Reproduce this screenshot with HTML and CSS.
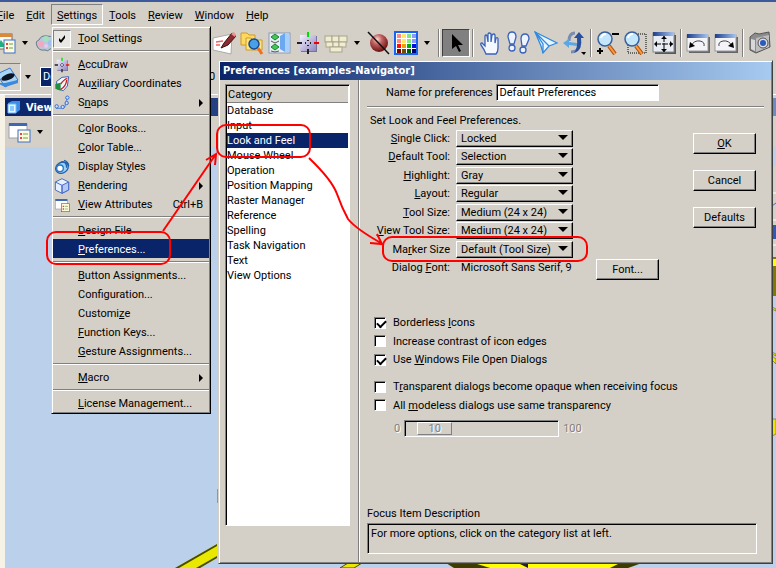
FILE: index.html
```
<!DOCTYPE html>
<html lang="en">
  <head>
    <meta charset="utf-8">
    <meta name="viewport" content="width=device-width,initial-scale=1.0">
    <title>Preferences [examples-Navigator]</title>
    <link rel="stylesheet" href="styles.css">
  </head>

  <body>
    <!-- Shared icons -->
    <svg class="defs" width="0" height="0">
      <defs>
        <radialGradient id="red-ball" cx="0.4" cy="0.3" r="0.7">
          <stop offset="0" stop-color="#ffd8d0"/>
          <stop offset="0.4" stop-color="#c06060"/>
          <stop offset="1" stop-color="#6a1010"/>
        </radialGradient>
        <linearGradient id="lilac" x1="0" y1="0" x2="1" y2="1">
          <stop offset="0" stop-color="#f4f0ff"/>
          <stop offset="1" stop-color="#8f88c0"/>
        </linearGradient>
        <linearGradient id="bar" x1="0" y1="0" x2="1" y2="0">
          <stop offset="0" stop-color="#1c3f8c"/>
          <stop offset="1" stop-color="#a8c4ee"/>
        </linearGradient>
        <symbol id="i-accudraw" viewBox="0 0 24 24">
          <rect x="5" y="5" width="16" height="16" fill="#77739a"/>
          <rect x="4" y="4" width="16" height="16" fill="url(#lilac)"/>
          <path d="M12 1v5" stroke="#00e000" stroke-width="2"/>
          <path d="M18 12h5" stroke="#f00000" stroke-width="2"/>
          <path d="M12 18v5M1 12h5M9 12h1M14 12h1M12 9v1M12 14v1" stroke="#222" stroke-width="2"/>
        </symbol>
        <symbol id="i-attributes" viewBox="0 0 24 24">
          <rect x="2" y="4" width="18" height="14" fill="#fff" stroke="#9aa2b4"/>
          <rect x="2" y="3" width="18" height="3" fill="#3d68b4"/>
          <rect x="11" y="10" width="12" height="12" fill="#fffbd8" stroke="#3a6ed0"/>
          <path d="M13 14h2M13 18h2" stroke="#f04040" stroke-width="2"/>
          <path d="M16 14h5M16 18h5" stroke="#60a060"/>
        </symbol>
        <symbol id="i-glass" viewBox="0 0 24 24">
          <path d="M13 15l6 8" stroke="#b05010" stroke-width="4"/>
          <path d="M13 15l6 8" stroke="#ff9a3c" stroke-width="2"/>
          <circle cx="9" cy="8" r="7" fill="#c4e6fb" stroke="#38609c" stroke-width="1.5"/>
          <path d="M5 7q1-4 5-4" fill="none" stroke="#fff" stroke-width="2"/>
        </symbol>
      </defs>
    </svg>

    <div class="app">
      <nav class="menubar">
        <button><u>F</u>ile</button>
        <button><u>E</u>dit</button>
        <button class="open"><u>S</u>ettings</button>
        <button><u>T</u>ools</button>
        <button><u>R</u>eview</button>
        <button><u>W</u>indow</button>
        <button><u>H</u>elp</button>
      </nav>

      <!-- Main toolbar -->
      <div class="toolbar">
        <div class="group group-left">
          <button class="tool" aria-label="Models">
            <svg viewBox="0 0 24 24"><rect x="1" y="3" width="19" height="15" fill="#f8f8ff" stroke="#7f6a4a"/><rect x="1" y="3" width="19" height="3" fill="#d88a3a"/><path d="M3 16l6-7 5 7z" fill="#20b080"/><rect x="12" y="9" width="11" height="13" fill="#fffbd8" stroke="#3a6ed0"/><path d="M14 13h2M14 17h2" stroke="#f04040" stroke-width="2"/><path d="M17 13h4M17 17h4" stroke="#60a060"/></svg>
          </button>
          <span class="drop"></span>
          <button class="tool" aria-label="References">
            <svg viewBox="0 0 24 24"><path d="M3 15q-2-5 2-6 2-5 8-4 8 0 9 7-1 6-6 6-2 3-5 1-6 1-8-4z" fill="#b8c8d8" stroke="#687888"/><circle cx="7" cy="13" r="3" fill="#f4a8c0"/><circle cx="12" cy="8" r="3" fill="#a4e0c0"/><circle cx="17" cy="12" r="3" fill="#9cc0f0"/><circle cx="12" cy="15" r="2" fill="#e8c8f0"/></svg>
          </button>
        </div>
        <div class="group">
          <button class="tool" aria-label="Markup">
            <svg viewBox="0 0 24 24"><path d="M1 7l19-4-1 20-18-4z" fill="#fff" stroke="#aaa"/><path d="M4 11l7-1M4 14l4 0" stroke="#f06060" stroke-width="1.5"/><path d="M9 17l3-5L20 2l4 3-8 9z" fill="#8c2c30" stroke="#401010"/><path d="M19 3l3-2 2 3-1 2z" fill="#f09090"/></svg>
          </button>
          <button class="tool" aria-label="Project Explorer">
            <svg viewBox="0 0 24 24"><path d="M1 2h6l2 2h6v10H1z" fill="#ffd860" stroke="#d09a20"/><path d="M6 7h5l2 2h9v10H6z" fill="#ffe680" stroke="#d09a20"/><path d="M18 17l4 6" stroke="#f07020" stroke-width="3"/><circle cx="14" cy="13" r="5" fill="#4aa0e8" stroke="#154a90" stroke-width="1.5"/></svg>
          </button>
          <button class="tool" aria-label="Level Display">
            <svg viewBox="0 0 24 24"><rect x="1" y="2" width="21" height="20" fill="#e8ecf4" stroke="#8a9ab4"/><path d="M12 5l5-3v19l-5-3z" fill="#6aa8f0"/><path d="M17 2h4v19h-4z" fill="#a8d0ff"/><path d="M3 6l4-3 4 3-4 3zM3 16l4-3 4 3-4 3z" fill="#40c850" stroke="#208030"/><path d="M3 10l4 2 4-2M3 20l4 1 4-1" fill="none" stroke="#555"/></svg>
          </button>
          <button class="tool" aria-label="AccuDraw"><svg><use href="#i-accudraw"/></svg></button>
          <button class="tool" aria-label="Key-in">
            <svg viewBox="0 0 24 24"><g fill="#f0ecd0" stroke="#a8a48c"><rect x="1" y="5" width="7" height="6"/><rect x="8" y="5" width="7" height="6"/><rect x="15" y="5" width="8" height="6"/><rect x="2" y="11" width="7" height="5"/><rect x="9" y="11" width="6" height="5"/><rect x="15" y="11" width="7" height="5"/><rect x="6" y="16" width="12" height="5"/></g></svg>
          </button>
          <span class="drop"></span>
          <button class="tool" aria-label="Hide">
            <svg viewBox="0 0 24 24"><circle cx="13" cy="12" r="9" fill="url(#red-ball)"/><path d="M2 1l21 22" stroke="#111" stroke-width="1.5"/></svg>
          </button>
          <button class="tool" aria-label="Color Table">
            <svg viewBox="0 0 24 24"><rect x="1" y="1" width="22" height="22" fill="#fff" stroke="#1a62f0" stroke-width="2"/>
              <path d="M3 5h4M3 10h4" stroke="#ff8888" stroke-width="4"/><path d="M8 5h4M8 10h4" stroke="#ffe860" stroke-width="4"/><path d="M13 5h4M13 10h4" stroke="#80e880" stroke-width="4"/><path d="M18 5h4M18 10h4" stroke="#8a9aff" stroke-width="4"/>
              <path d="M3 15h4" stroke="#ff1010" stroke-width="4"/><path d="M8 15h4" stroke="#f0a000" stroke-width="4"/><path d="M13 15h4" stroke="#00b000" stroke-width="4"/><path d="M18 15h4" stroke="#0010e0" stroke-width="4"/>
              <path d="M3 20h4" stroke="#800000" stroke-width="4"/><path d="M8 20h4" stroke="#685000" stroke-width="4"/><path d="M13 20h4" stroke="#006000" stroke-width="4"/><path d="M18 20h4" stroke="#000070" stroke-width="4"/></svg>
          </button>
          <span class="drop"></span>
        </div>
        <div class="group group-view">
          <span class="sep"></span>
          <button class="tool pressed" aria-label="Element Selection">
            <svg viewBox="0 0 24 24"><path d="M8 3v15l4-3 3 6 2-1-3-6h5z" fill="#000"/></svg>
          </button>
          <span class="sep"></span>
          <button class="tool" aria-label="Pan View">
            <svg viewBox="0 0 24 24"><path d="M8 23q-2-5-5-9-1-2 1-2l3 3V5q1-2 2 0l1 6V3q1-2 3 0v8l1-7q2-2 3 0v8l1-5q2-1 2 1v9q0 4-2 6z" fill="#f4f8ff" stroke="#3a62b8" stroke-width="1.3"/></svg>
          </button>
          <button class="tool" aria-label="Walk">
            <svg viewBox="0 0 24 24" fill="#eef4ff" stroke="#3a62b8" stroke-width="1.3"><path d="M6 1q4 0 4 5l-2 7H4L2 6q0-5 4-5z"/><ellipse cx="6" cy="17" rx="3" ry="3"/><path d="M19 3q4 0 4 5l-3 7h-4l-1-7q0-5 4-5z"/><ellipse cx="17" cy="19" rx="3" ry="3"/></svg>
          </button>
          <button class="tool" aria-label="Fly">
            <svg viewBox="0 0 24 24"><path d="M1 1l22 11-8 3-6 7-2-7z" fill="#eaf6ff" stroke="#2f8ae0" stroke-width="1.3"/><path d="M1 1l8 12v9M1 1l14 14" fill="none" stroke="#2f8ae0" stroke-width="1.3"/></svg>
          </button>
          <button class="tool" aria-label="Rotate View">
            <svg viewBox="0 0 24 24"><path d="M13 2q-6 0-6 8M17 8v8q-2 5-8 5" fill="none" stroke="#7a8cb0" stroke-width="3"/><path d="M12 7l5-6 5 6h-3q2 12-7 15 4-5 3-15z" fill="#28509c"/><path d="M1 12l6-4v3l8 1v3l-8-1v3z" fill="#58a8e8"/><path d="M19 21h5l-2 3z" fill="#000"/></svg>
          </button>
          <span class="sep"></span>
          <button class="tool" aria-label="Zoom">
            <svg viewBox="0 0 24 24"><use href="#i-glass" width="24" height="24"/><path d="M16 3h7M1 20h6M4 17v6" stroke="#000" stroke-width="2"/></svg>
          </button>
          <button class="tool" aria-label="Window Area">
            <svg viewBox="0 0 24 24"><rect x="4" y="3" width="18" height="19" fill="none" stroke="#000" stroke-dasharray="1 1"/><use href="#i-glass" x="-1" width="24" height="24"/></svg>
          </button>
          <button class="tool" aria-label="Fit View">
            <svg viewBox="0 0 24 24"><rect x="3" y="4" width="21" height="19" fill="#55585f"/><rect x="1" y="2" width="21" height="19" fill="#e8ecf4" stroke="#888"/><rect x="1" y="1" width="21" height="4" fill="url(#bar)"/><path d="M12 5v16M3 13h18" stroke="#000" stroke-dasharray="6 1"/><path d="M9 8l3-3 3 3zM9 18l3 3 3-3zM5 10l-3 3 3 3zM18 10l3 3-3 3z"/></svg>
          </button>
          <span class="sep"></span>
          <button class="tool" aria-label="View Previous">
            <svg viewBox="0 0 24 24"><rect x="3" y="6" width="21" height="16" fill="#666"/><rect x="1" y="4" width="21" height="16" fill="#f4f4f8" stroke="#999"/><rect x="1" y="3" width="21" height="4" fill="url(#bar)"/><path d="M5 15q3-6 9-5 5 1 4 5" fill="none" stroke="#444"/><path d="M3 17l1-6 5 4z"/></svg>
          </button>
          <button class="tool" aria-label="View Next">
            <svg viewBox="0 0 24 24"><rect x="3" y="6" width="21" height="16" fill="#666"/><rect x="1" y="4" width="21" height="16" fill="#f4f4f8" stroke="#999"/><rect x="1" y="3" width="21" height="4" fill="url(#bar)"/><path d="M18 15q-3-6-9-5-5 1-4 5" fill="none" stroke="#444"/><path d="M20 17l-1-6-5 4z"/></svg>
          </button>
          <span class="sep"></span>
          <button class="tool" aria-label="Copy View">
            <svg viewBox="0 0 24 24"><path d="M2 6l5-4 4 1 10-2 1 15-14 6-6-3z" fill="#8c8c8c" stroke="#555"/><path d="M8 7l13-3v12L8 21z" fill="#bdbdbd"/><circle cx="15" cy="12" r="5" fill="#ddd" stroke="#555"/><circle cx="15" cy="12" r="3" fill="#2a5ac0"/><path d="M3 8l4 1v11l-4-2z" fill="#d8d8d8"/></svg>
          </button>
        </div>
      </div>

      <!-- Attributes toolbar -->
      <div class="toolbar attributes">
        <button class="tool template" aria-label="Active Template">
          <svg viewBox="0 0 24 24"><path d="M2 9l13-6 8 12-13 7z" fill="#a8d4f8" stroke="#3a78c8"/><path d="M2 18l8 4 13-4v-3l-13 3z" fill="#3a88e0"/><ellipse cx="13" cy="12" rx="7" ry="3" transform="rotate(-20 13 12)" fill="#0c1424"/></svg>
        </button>
        <span class="drop"></span>
        <input class="level" type="text" value="Default" aria-label="Active Level">
        <span class="level-number">0</span>
      </div>

      <!-- Design view -->
      <div class="workspace">
        <div class="view">
          <div class="view-title">
            <svg viewBox="0 0 14 14"><path d="M1 3l4-2h8v9l-4 3H1z" fill="#3d8ce8"/><path d="M1 4h8v9H1z" fill="#e8f6ff" stroke="#68b8ff"/><path d="M3 6h4v5H3z" fill="#8cc8ff"/></svg>
            View 1
          </div>
          <div class="view-tools">
            <button class="tool" aria-label="View Attributes"><svg><use href="#i-attributes"/></svg></button>
            <span class="drop"></span>
          </div>
          <div class="canvas">
            <svg class="model" width="771" height="421" viewBox="5 147 771 421">
              <path d="M175 568l42-24v14l-18 10z" fill="#e8e800"/>
              <path d="M175 568l42-24v2l-38 22zM196 568l21-12v2l-17 10z" fill="#4c4c00"/>
              <path d="M217 489h2v14h-2z" fill="#a8a800"/>
              <path d="M340 568l8-5h14l-8 5z" fill="#e8e800" stroke="#4c4c00"/>
              <path d="M446 563h196l-14 5H454z" fill="#3c3c00"/>
              <path d="M474 563h146l-10 5H490z" fill="#ffff00"/>
              <path d="M518 563l10 5v-5z" fill="#222"/>
              <path d="M772 166h4v91h-4z" fill="#d4d0c8"/>
              <path d="M772 193h4M772 220h4M772 245h4" stroke="#fff"/>
              <path d="M772 206l4-3" stroke="#3a6ed0"/>
              <path d="M772 225h4v14h-4z" fill="#2a5ac0"/>
              <path d="M772 257h4v39h-4z" fill="#7c7c00"/>
              <path d="M772 259h4v7h-4z" fill="#ffff00"/>
              <path d="M772 307l4 2v2l-4-2zM772 352l4 2v2l-4-2zM772 356l4 3v5l-4-4zM772 419h4v15l-4 2z" fill="#e8e800" stroke="#4c4c00" stroke-width="0.5"/>
            </svg>
          </div>
        </div>
      </div>

      <!-- Settings menu -->
      <ul class="menu">
        <li class="ticked"><span class="tick"><svg viewBox="0 0 12 12"><path d="M3 5v3l2 2 4-5V2L5 7z"/></svg></span><a href="#"><u>T</u>ool Settings</a></li>
        <li class="line"></li>
        <li><svg><use href="#i-accudraw"/></svg><a href="#"><u>A</u>ccuDraw</a></li>
        <li><svg viewBox="0 0 24 24"><path d="M4 8l8-6 10-1-2 14-6 7-10-3z" fill="#f4f8ff" stroke="#3a62b8" stroke-width="1.5"/><path d="M2 12l8-2v12l-8-3z" fill="#209040"/><path d="M10 12q6-8 10-8M10 20q8-4 9-14" fill="none" stroke="#c02020" stroke-width="2"/></svg><a href="#">Au<u>x</u>iliary Coordinates</a></li>
        <li class="sub"><svg viewBox="0 0 24 24"><path d="M3 20h6q9 0 8-6l3-9" fill="none" stroke="#6a90d8" stroke-width="2"/><g fill="#cfe0ff" stroke="#3a6ed0" stroke-width="1.5"><circle cx="4" cy="17" r="2.5"/><circle cx="13" cy="18" r="2.5"/><circle cx="19" cy="12" r="2.5"/><circle cx="20" cy="4" r="2.5"/></g></svg><a href="#">S<u>n</u>aps</a></li>
        <li class="line"></li>
        <li><a href="#">C<u>o</u>lor Books...</a></li>
        <li><a href="#"><u>C</u>olor Table...</a></li>
        <li><svg viewBox="0 0 24 24"><ellipse cx="12" cy="13" rx="10" ry="8" transform="rotate(-30 12 13)" fill="#9cd0f8" stroke="#2060a8" stroke-width="2"/><circle cx="9" cy="14" r="5" fill="#fff" stroke="#2878c8" stroke-width="2"/><path d="M11 4q8 0 8 9M15 2q7 2 7 9" fill="none" stroke="#2060a8" stroke-width="2"/></svg><a href="#">Display St<u>y</u>les</a></li>
        <li class="sub"><svg viewBox="0 0 24 24" stroke="#4a6cc8" stroke-width="1.5"><path d="M12 1l10 5v12l-10 5-10-5V6z" fill="#e8f0ff"/><path d="M12 11l10-5v12l-10 5z" fill="#b4c8f4"/><path d="M2 6l10 5v12" fill="none"/></svg><a href="#"><u>R</u>endering</a></li>
        <li><svg><use href="#i-attributes"/></svg><a href="#"><u>V</u>iew Attributes</a><kbd>Ctrl+B</kbd></li>
        <li class="line"></li>
        <li><a href="#"><u>D</u>esign File</a></li>
        <li class="active"><a href="#"><u>P</u>references...</a></li>
        <li class="line"></li>
        <li><a href="#"><u>B</u>utton Assignments...</a></li>
        <li><a href="#">Confi<u>g</u>uration...</a></li>
        <li><a href="#">Customi<u>z</u>e</a></li>
        <li><a href="#"><u>F</u>unction Keys...</a></li>
        <li><a href="#"><u>G</u>esture Assignments...</a></li>
        <li class="line"></li>
        <li class="sub"><a href="#"><u>M</u>acro</a></li>
        <li class="line"></li>
        <li><a href="#"><u>L</u>icense Management...</a></li>
      </ul>

      <!-- Preferences dialog -->
      <form class="dialog">
        <h1>Preferences [examples-Navigator]</h1>
        <div class="dialog-body">
          <div class="side">
            <div class="categories">
              <h2>Category</h2>
              <ul>
                <li>Database</li>
                <li>Input</li>
                <li class="active">Look and Feel</li>
                <li>Mouse Wheel</li>
                <li>Operation</li>
                <li>Position Mapping</li>
                <li>Raster Manager</li>
                <li>Reference</li>
                <li>Spelling</li>
                <li>Task Navigation</li>
                <li>Text</li>
                <li>View Options</li>
              </ul>
            </div>
          </div>

          <div class="main">
            <div class="name-row">
              <label for="name">Name for preferences</label>
              <input type="text" id="name" value="Default Preferences">
            </div>

            <div class="settings">
              <div class="fields">
                <p>Set Look and Feel Preferences.</p>
                <div class="field"><label for="click"><u>S</u>ingle Click:</label><span class="select"><select id="click"><option>Locked</option></select></span></div>
                <div class="field"><label for="tool"><u>D</u>efault Tool:</label><span class="select"><select id="tool"><option>Selection</option></select></span></div>
                <div class="field"><label for="highlight"><u>H</u>ighlight:</label><span class="select"><select id="highlight"><option>Gray</option></select></span></div>
                <div class="field"><label for="layout"><u>L</u>ayout:</label><span class="select"><select id="layout"><option>Regular</option></select></span></div>
                <div class="field"><label for="size"><u>T</u>ool Size:</label><span class="select"><select id="size"><option>Medium (24 x 24)</option></select></span></div>
                <div class="field"><label for="view-size"><u>V</u>iew Tool Size:</label><span class="select"><select id="view-size"><option>Medium (24 x 24)</option></select></span></div>
                <div class="field"><label for="marker">Ma<u>r</u>ker Size</label><span class="select"><select id="marker"><option>Default (Tool Size)</option></select></span></div>
                <div class="field"><label for="font">Dialog <u>F</u>ont:</label><span class="font-name">Microsoft Sans Serif, 9</span><button type="button" class="push" id="font">Font...</button></div>
              </div>
              <div class="actions">
                <button type="button" class="push"><u>O</u>K</button>
                <button type="button" class="push">Cancel</button>
                <button type="button" class="push">Defaults</button>
              </div>
            </div>

            <div class="options">
              <div class="option"><input type="checkbox" id="borderless" checked><label for="borderless">Borderless <u>I</u>cons</label></div>
              <div class="option"><input type="checkbox" id="contrast"><label for="contrast">Increase contrast of icon edges</label></div>
              <div class="option"><input type="checkbox" id="file-open" checked><label for="file-open">Use <u>W</u>indows File Open Dialogs</label></div>
            </div>
            <div class="options">
              <div class="option"><input type="checkbox" id="opaque"><label for="opaque">T<u>r</u>ansparent dialogs become opaque when receiving focus</label></div>
              <div class="option"><input type="checkbox" id="modeless"><label for="modeless">All <u>m</u>odeless dialogs use same transparency</label></div>
            </div>
            <div class="transparency">
              <label for="transparency">0</label>
              <span class="slider">
                <input type="range" id="transparency" min="0" max="100" value="10" disabled>
                <output for="transparency">10</output>
              </span>
              <span>100</span>
            </div>

            <div class="description">
              <h2>Focus Item Description</h2>
              <p>For more options, click on the category list at left.</p>
            </div>
          </div>
        </div>
      </form>

      <!-- Callouts -->
      <svg class="callouts" width="776" height="568" viewBox="0 0 776 568">
        <rect x="47" y="232" width="123" height="32" rx="9"/>
        <rect x="217" y="125" width="93" height="32" rx="9"/>
        <rect x="383" y="237" width="204" height="24" rx="9"/>
        <path d="M163 231L216 154M206 160l10-6-1 11"/>
        <path d="M309 158Q332 180 337 194T348 219Q356 229 381 243M377 234l5 10-12-1"/>
      </svg>
    </div>
  </body>
</html>
```
FILE: styles.css
```
* { box-sizing: border-box; }

body {
  margin: 0;
  font: 11px/15px Roboto, "Liberation Sans", Arial, sans-serif;
  color: #000;
  background: #bbd0ea;
}

button, input, select { font: inherit; color: inherit; margin: 0; }
button { background: none; border: none; padding: 0; }
ul { list-style: none; margin: 0; padding: 0; }
h1, h2, p { margin: 0; font: inherit; }
a { color: inherit; text-decoration: none; }
svg { display: block; }
.defs { position: absolute; }

.app {
  position: relative;
  display: flex;
  flex-direction: column;
  min-height: 100vh;
  overflow: hidden;
  background: #d4d0c8;
  border-top: 2px solid #3c5a9c;
}

/* Menu bar */
.menubar {
  display: flex;
  padding-top: 2px;
  margin-left: -9px;
}
.menubar button {
  height: 21px;
  padding: 2px 5px 0;
  border: 1px solid transparent;
  white-space: nowrap;
}
.menubar .open { border-color: #808080 #fff #fff #808080; }

/* Toolbars */
.toolbar {
  display: flex;
  align-items: center;
  height: 36px;
}
.group { display: flex; align-items: center; flex: none; }
.group-left { width: 210px; margin-left: -10px; margin-right: 10px; }
.group-view { margin-left: 2px; }
.tool {
  display: flex;
  align-items: center;
  justify-content: center;
  flex: none;
  width: 28px;
  height: 28px;
}
.tool svg { width: 24px; height: 24px; }
.tool.pressed {
  background: #808080;
  border: 1px solid #404040;
  border-color: #404040 #fff #fff #404040;
}
.drop {
  display: flex;
  justify-content: center;
  flex: none;
  width: 14px;
}
.drop::after {
  content: "";
  border: 3px solid transparent;
  border-top: 4px solid #000;
  border-bottom: 0;
}
.sep {
  flex: none;
  width: 2px;
  height: 28px;
  margin: 0 2px;
  background: #808080;
  border-right: 1px solid #fff;
}

.attributes { height: 34px; padding-bottom: 2px; border-bottom: 1px solid #fff; }
.template {
  margin-left: -7px;
  border: 1px solid;
  border-color: #808080 #fff #fff #808080;
}
.level {
  width: 160px;
  height: 20px;
  margin: 0 9px 0 5px;
  padding: 0 2px;
  color: #fff;
  background: #0a246a;
  border: 1px solid #fff;
}

/* Design view */
.workspace {
  display: flex;
  flex: 1;
  border-left: 5px solid #f6f2e6;
}
.view { display: flex; flex-direction: column; flex: 1; padding-top: 3px; }
.view-title {
  display: flex;
  align-items: center;
  gap: 5px;
  height: 18px;
  padding-left: 2px;
  color: #fff;
  font: bold 11px "DejaVu Sans Condensed", "DejaVu Sans", sans-serif;
  background: linear-gradient(to right, #0a246a, #6a8cc4);
}
.view-title svg { width: 14px; height: 14px; }
.view-tools { display: flex; align-items: center; height: 31px; }
.canvas { position: relative; flex: 1; background: #bbd0ea; }
.model { position: absolute; top: 0; left: 0; }

/* Settings menu */
.menu {
  position: absolute;
  top: 24px;
  left: 51px;
  width: 160px;
  background: #d4d0c8;
  border: 1px solid;
  border-color: #d4d0c8 #000 #000 #d4d0c8;
  box-shadow: inset 1px 1px #fff, inset -1px -1px #808080;
  padding: 1px;
}
.menu li {
  position: relative;
  display: flex;
  align-items: center;
  height: 19px;
  padding: 2px 6px 0 25px;
  white-space: nowrap;
}
.menu li > svg,
.menu .tick {
  position: absolute;
  left: 1px;
  width: 16px;
  height: 16px;
}
.menu .tick {
  left: 0;
  width: 18px;
  height: 18px;
  padding: 2px;
  background: #e9e7e3;
  border: 1px solid;
  border-color: #808080 #fff #fff #808080;
}
.menu .line {
  height: 7px;
  padding: 0;
}
.menu .line::after {
  content: "";
  flex: 1;
  border-top: 1px solid #808080;
  border-bottom: 1px solid #fff;
}
.menu .active { color: #fff; background: #0a246a; }
.menu kbd { margin-left: auto; font: inherit; }
.menu .sub::after {
  content: "";
  margin-left: auto;
  border: 4px solid transparent;
  border-left-color: #000;
  border-right: 0;
}

/* Dialog */
.dialog {
  position: absolute;
  top: 58px;
  left: 218px;
  right: 3px;
  bottom: 4px;
  display: flex;
  flex-direction: column;
  background: #d4d0c8;
  border: 1px solid;
  border-color: #d4d0c8 #404040 #404040 #d4d0c8;
  box-shadow: inset 1px 1px #fff, inset -1px -1px #808080;
  padding: 1px;
}
.dialog h1 {
  height: 18px;
  padding-left: 3px;
  color: #fff;
  font: bold 11px/17px "DejaVu Sans Condensed", "DejaVu Sans", sans-serif;
  background: linear-gradient(to right, #0a246a, #a6caf0);
}
.dialog-body { display: flex; flex: 1; }
.side {
  display: flex;
  width: 139px;
  padding: 4px 8px 36px 5px;
  border-right: 1px solid #808080;
}
.categories {
  flex: 1;
  background: #fff;
  border: 1px solid;
  border-color: #808080 #fff #fff #808080;
  box-shadow: inset 1px 1px #000;
  padding: 1px;
}
.categories h2 {
  height: 17px;
  padding: 1px 1px;
  background: #d4d0c8;
  border-bottom: 1px solid #808080;
}
.categories .active { color: #fff; background: #0a246a; }

.main {
  display: flex;
  flex-direction: column;
  flex: 1;
  padding: 4px 7px 8px 7px;
  border-left: 1px solid #fff;
}
.name-row {
  display: flex;
  align-items: center;
  gap: 3px;
  padding: 0 0 5px 19px;
  border-bottom: 1px solid #808080;
  box-shadow: 0 1px #fff;
}
.name-row input {
  width: 163px;
  height: 17px;
  padding: 0 3px;
  background: #fff;
  border: 1px solid;
  border-color: #808080 #fff #fff #808080;
  box-shadow: inset 1px 1px #000;
}

.settings { display: flex; justify-content: space-between; }
.fields { padding-top: 6px; }
.fields p { height: 17px; padding-left: 3px; }
.field { display: flex; height: 18px; white-space: nowrap; }
.field:nth-child(odd) { height: 19px; }
.field label { width: 83px; line-height: 18px; text-align: right; margin-right: 6px; }
.select { position: relative; width: 117px; height: 17px; }
.select::after {
  content: "";
  position: absolute;
  top: 5px;
  right: 5px;
  border: 5px solid transparent;
  border-top-color: #000;
  border-bottom: 0;
}
select {
  display: block;
  appearance: none;
  width: 100%;
  height: 17px;
  padding: 0 4px;
  border-radius: 0;
}
select, .push {
  background: #d4d0c8;
  border: 1px solid;
  border-color: #fff #000 #000 #fff;
  box-shadow: inset -1px -1px #808080;
}
.push { width: 63px; height: 21px; }
.font-name { width: 140px; padding-left: 5px; line-height: 18px; }

.actions {
  display: flex;
  flex-direction: column;
  gap: 16px;
  padding: 26px 8px 0 0;
}

.options { padding: 35px 0 0 7px; }
.options + .options { padding-top: 8px; }
.option { display: flex; align-items: center; gap: 7px; height: 19px; }
.option:nth-child(2) { height: 18px; }
.option input {
  appearance: none;
  width: 12px;
  height: 12px;
  background: #fff;
  border: 1px solid;
  border-color: #808080 #fff #fff #808080;
  box-shadow: inset 1px 1px #000;
}
.option input:checked::after {
  content: "";
  display: block;
  width: 7px;
  height: 4px;
  margin: 2px 0 0 2px;
  border: solid #000;
  border-width: 0 0 2px 2px;
  transform: rotate(-45deg);
}

.transparency {
  display: flex;
  align-items: center;
  gap: 4px;
  padding: 6px 0 0 27px;
  color: #808080;
  text-shadow: 1px 1px #fff;
}
.slider {
  position: relative;
  width: 155px;
  height: 17px;
  border: 1px solid;
  border-color: #808080 #fff #fff #808080;
  box-shadow: inset 1px 1px #000;
}
.slider input { appearance: none; display: block; width: 100%; height: 15px; background: none; }
.slider input::-webkit-slider-thumb {
  appearance: none;
  width: 35px;
  height: 13px;
  background: #d4d0c8;
  border: 1px solid;
  border-color: #fff #808080 #808080 #fff;
}
.slider output {
  position: absolute;
  top: 0;
  left: 12px;
  width: 35px;
  text-align: center;
}

.description { margin-top: auto; }
.description p {
  height: 31px;
  margin: 2px 7px 0 0;
  padding: 2px 3px;
  border: 1px solid;
  border-color: #808080 #fff #fff #808080;
  box-shadow: inset 1px 1px #000;
}

/* Callouts */
.callouts {
  position: absolute;
  top: -2px;
  left: 0;
  fill: none;
  stroke: #f00;
  stroke-width: 2;
  pointer-events: none;
}
```
